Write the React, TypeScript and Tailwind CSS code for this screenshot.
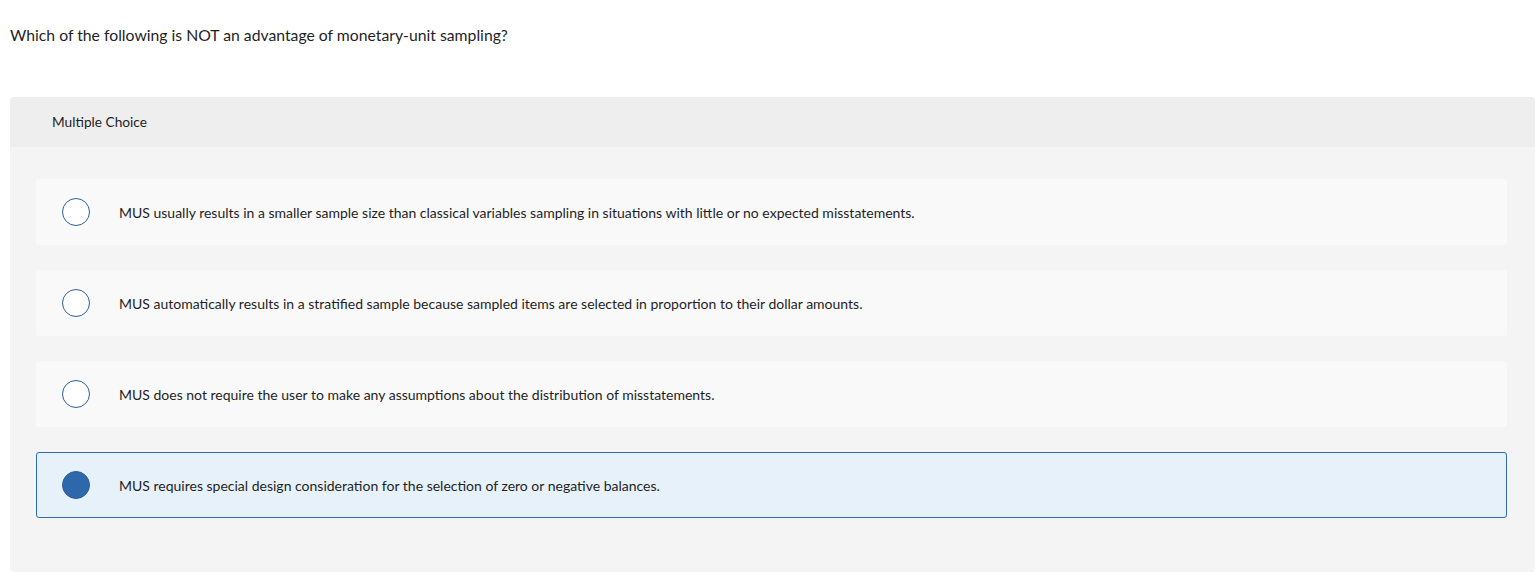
import React from "react";

const options = [
  "MUS usually results in a smaller sample size than classical variables sampling in situations with little or no expected misstatements.",
  "MUS automatically results in a stratified sample because sampled items are selected in proportion to their dollar amounts.",
  "MUS does not require the user to make any assumptions about the distribution of misstatements.",
  "MUS requires special design consideration for the selection of zero or negative balances.",
];

export default function App() {
  const selected = 3;
  return (
    <div className="w-[1535px] h-[574px] bg-white text-[#1f1f1f] overflow-hidden" style={{ fontFamily: "Lato, 'Liberation Sans', sans-serif" }}>
      <div className="pl-[10px] pt-[25px] h-[97px] text-[15.75px] leading-[20px]">
        Which of the following is NOT an advantage of monetary-unit sampling?
      </div>
      <div className="ml-[10px] h-[475px] rounded-[4px] bg-[#f4f4f4] overflow-hidden">
        <div className="h-[50px] bg-[#eeeeee] flex items-center pl-[42px] text-[13.7px]">Multiple Choice</div>
        <div className="pt-[32px] pl-[26px] pr-[28px] flex flex-col gap-[25px]">
          {options.map((t, i) => {
            const sel = i === selected;
            return (
              <div
                key={i}
                className={
                  sel
                    ? "h-[66px] rounded-[3px] border border-[#2f6bb3] bg-[#e7f1fa] flex items-center pl-[25px] text-[14px]"
                    : "h-[66px] rounded-[3px] border border-transparent bg-[#f9f9f9] flex items-center pl-[25px] text-[14px]"
                }
              >
                <div
                  className={
                    sel
                      ? "w-[28px] h-[28px] rounded-full border border-[#2a5f9e] bg-[#2e67ab] shrink-0"
                      : "w-[28px] h-[28px] rounded-full border-[1.5px] border-[#2a5f9e] bg-white shrink-0"
                  }
                />
                <span className="ml-[29px]">{t}</span>
              </div>
            );
          })}
        </div>
      </div>
    </div>
  );
}
